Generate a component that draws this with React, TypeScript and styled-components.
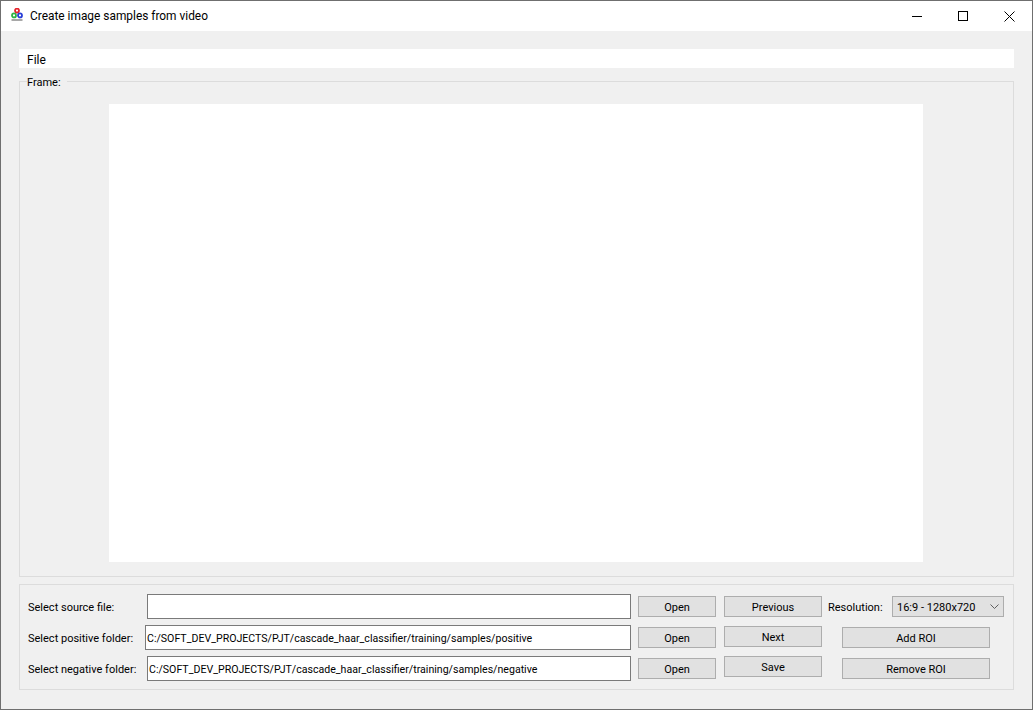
import React from "react";
import styled, { createGlobalStyle } from "styled-components";

const GlobalStyle = createGlobalStyle`
    html, body {
        margin: 0;
        padding: 0;
        background: #f0f0f0;
    }

    body {
        font-family: Roboto, "Liberation Sans", sans-serif;
        font-size: 11px;
        color: #000000;
    }
`;

const Window = styled.div`
    box-sizing: border-box;
    width: 1033px;
    height: 710px;
    display: flex;
    flex-direction: column;
    border: 1px solid #6f6f6f;
    background: #f0f0f0;
`;

const TitleBar = styled.div`
    height: 30px;
    display: flex;
    align-items: center;
    background: #ffffff;
    padding-left: 9px;
`;

const TitleText = styled.span`
    margin-left: 4px;
    font-size: 11.9px;
`;

const WindowButtons = styled.div`
    margin-left: auto;
    display: flex;
`;

const WindowButton = styled.div`
    width: 46px;
    height: 30px;
    display: flex;
    align-items: center;
    justify-content: center;
`;

const Content = styled.div`
    flex: 1;
    display: flex;
    flex-direction: column;
    padding: 18px 18px 0;
`;

const MenuBar = styled.div`
    height: 19px;
    display: flex;
    align-items: center;
    background: #ffffff;
`;

const MenuItem = styled.span`
    padding: 2px 8px 0;
    font-size: 12px;
`;

const FrameGroup = styled.fieldset`
    margin: 4px 0 0;
    padding: 14px 1px 14px 0;
    border: 1px solid #dcdcdc;
    display: flex;
    justify-content: center;
`;

const FrameLegend = styled.legend`
    margin-left: 7px;
    padding: 4px 6px 0 0;
    line-height: 14px;
`;

const FrameView = styled.div`
    width: 814px;
    height: 458px;
    margin: 0 auto;
    background: #ffffff;
`;

const ControlsGroup = styled.div`
    margin-top: 7px;
    height: 106px;
    box-sizing: border-box;
    border: 1px solid #dcdcdc;
    padding: 6px 0 0 8px;
    display: grid;
    grid-template-columns: 119px 484px 93px 98px 1fr;
    grid-auto-rows: 31px;
    align-items: center;
`;

const FieldLabel = styled.label`
    padding-top: 1px;
    white-space: nowrap;
`;

const PathInput = styled.div<{ $outdent?: boolean }>`
    box-sizing: border-box;
    height: 25px;
    margin-left: ${(p) => (p.$outdent ? "-2px" : "0")};
    padding: 1px 0 0 1px;
    display: flex;
    align-items: center;
    background: #ffffff;
    border: 1px solid #7a7a7a;
    font-size: 10.6px;
    white-space: nowrap;
    overflow: hidden;
`;

const PushButton = styled.button<{ $width: number; $lift?: number }>`
    box-sizing: border-box;
    width: ${(p) => p.$width}px;
    height: 21px;
    margin: 0 0 ${(p) => p.$lift ?? 0}px 0;
    padding: 1px 0 0;
    background: #e1e1e1;
    border: 1px solid #adadad;
    font: inherit;
    color: #000000;
`;

const OpenButton = styled(PushButton)`
    margin-left: 7px;
`;

const RoiButton = styled(PushButton)`
    margin-left: 20px;
`;

const ResolutionCell = styled.div`
    display: flex;
    align-items: center;
    padding-left: 6px;
`;

const ResolutionLabel = styled.span`
    width: 64px;
    padding-top: 1px;
    white-space: nowrap;
`;

const ComboBox = styled.div`
    box-sizing: border-box;
    width: 112px;
    height: 21px;
    display: flex;
    align-items: center;
    justify-content: space-between;
    padding: 1px 4px 0 4px;
    background: #e1e1e1;
    border: 1px solid #adadad;
`;

function OpenCvIcon(): JSX.Element {
    return <svg width="16" height="16" viewBox="0 0 16 16">
        <circle cx="7" cy="2.6" r="2" fill="none" stroke="#e5232b" strokeWidth="1.8" />
        <circle cx="4" cy="7.4" r="2" fill="none" stroke="#2fb344" strokeWidth="1.8" />
        <circle cx="10" cy="7.4" r="2" fill="none" stroke="#2a3fd8" strokeWidth="1.8" />
        <rect x="1.5" y="11" width="11" height="2" fill="#a8a8a8" />
    </svg>;
}

function MinimizeIcon(): JSX.Element {
    return <svg width="10" height="10" viewBox="0 0 10 10">
        <path d="M0 5.5H10" stroke="#000000" strokeWidth="1" />
    </svg>;
}

function MaximizeIcon(): JSX.Element {
    return <svg width="10" height="10" viewBox="0 0 10 10">
        <rect x="0.5" y="0.5" width="9" height="9" fill="none" stroke="#000000" strokeWidth="1" />
    </svg>;
}

function CloseIcon(): JSX.Element {
    return <svg width="11" height="11" viewBox="0 0 11 11">
        <path d="M0.5 0.5L10.5 10.5M10.5 0.5L0.5 10.5" stroke="#000000" strokeWidth="1" />
    </svg>;
}

function ChevronIcon(): JSX.Element {
    return <svg width="9" height="6" viewBox="0 0 9 6">
        <path d="M0.5 0.5L4.5 4.5L8.5 0.5" fill="none" stroke="#5f5f5f" strokeWidth="1" />
    </svg>;
}

export default function App(): JSX.Element {
    return <>
        <GlobalStyle />
        <Window>
            <TitleBar>
                <OpenCvIcon />
                <TitleText>Create image samples from video</TitleText>
                <WindowButtons>
                    <WindowButton><MinimizeIcon /></WindowButton>
                    <WindowButton><MaximizeIcon /></WindowButton>
                    <WindowButton><CloseIcon /></WindowButton>
                </WindowButtons>
            </TitleBar>
            <Content>
                <MenuBar>
                    <MenuItem>File</MenuItem>
                </MenuBar>
                <FrameGroup>
                    <FrameLegend>Frame:</FrameLegend>
                    <FrameView />
                </FrameGroup>
                <ControlsGroup>
                    <FieldLabel>Select source file:</FieldLabel>
                    <PathInput />
                    <OpenButton $width={78}>Open</OpenButton>
                    <PushButton $width={98}>Previous</PushButton>
                    <ResolutionCell>
                        <ResolutionLabel>Resolution:</ResolutionLabel>
                        <ComboBox>
                            16:9 - 1280x720
                            <ChevronIcon />
                        </ComboBox>
                    </ResolutionCell>

                    <FieldLabel>Select positive folder:</FieldLabel>
                    <PathInput $outdent>C:/SOFT_DEV_PROJECTS/PJT/cascade_haar_classifier/training/samples/positive</PathInput>
                    <OpenButton $width={78}>Open</OpenButton>
                    <PushButton $width={98} $lift={2}>Next</PushButton>
                    <RoiButton $width={148}>Add ROI</RoiButton>

                    <FieldLabel>Select negative folder:</FieldLabel>
                    <PathInput>C:/SOFT_DEV_PROJECTS/PJT/cascade_haar_classifier/training/samples/negative</PathInput>
                    <OpenButton $width={78}>Open</OpenButton>
                    <PushButton $width={98} $lift={4}>Save</PushButton>
                    <RoiButton $width={148}>Remove ROI</RoiButton>
                </ControlsGroup>
            </Content>
        </Window>
    </>;
}
